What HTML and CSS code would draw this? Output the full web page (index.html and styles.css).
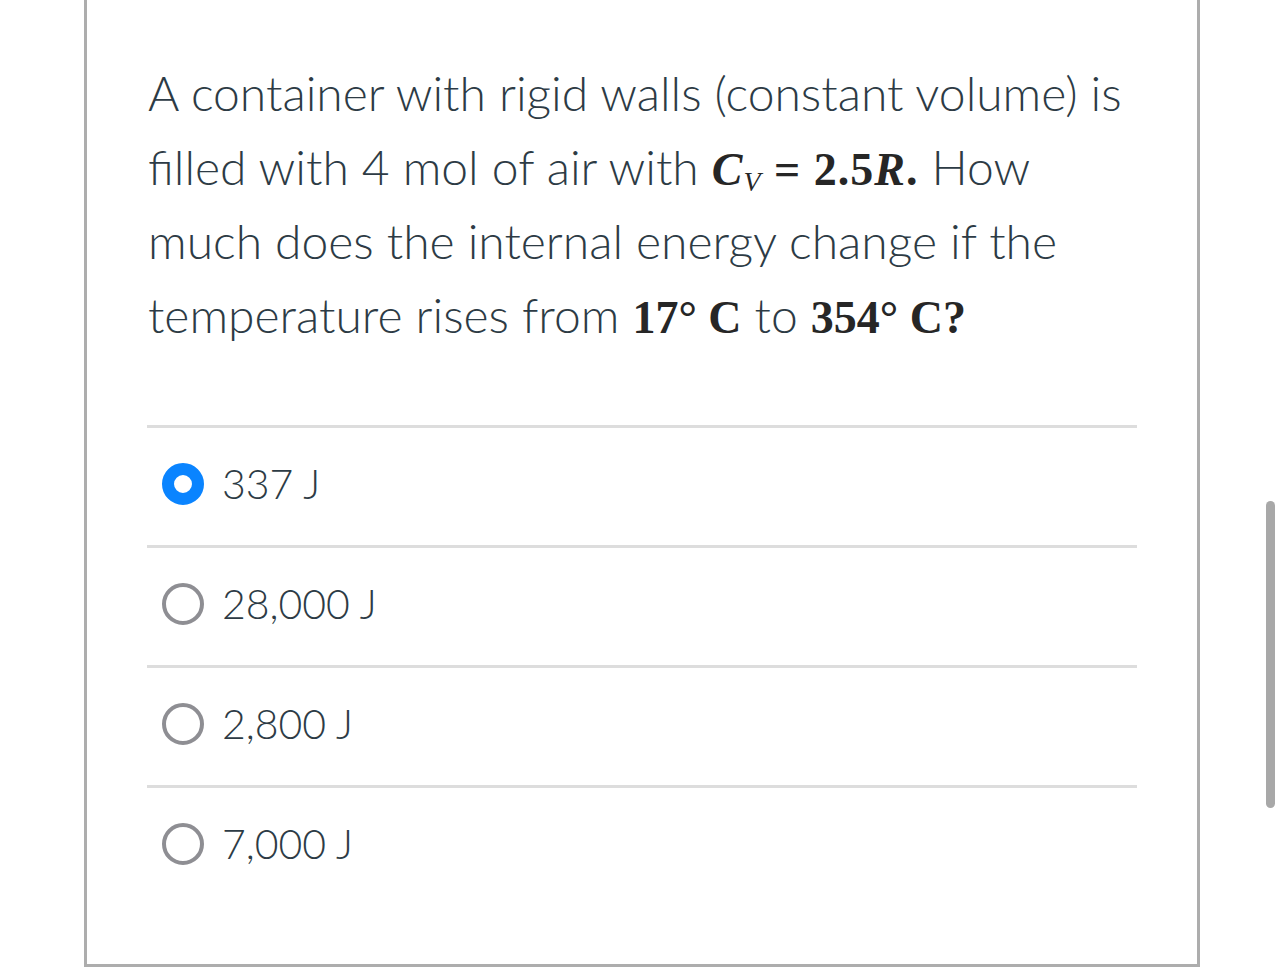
FILE: index.html
```html
<!DOCTYPE html>
<html lang="en">
<head>
<meta charset="utf-8">
<title>Question</title>
<link rel="stylesheet" href="styles.css">
</head>
<body>
<div class="page">
  <div class="card">
    <p class="question">A container with rigid walls (constant volume) is filled with 4 mol of air with <span class="math eq"><b class="it">C</b><sub class="sub">V</sub> = 2.5<b class="it">R</b>.</span> How much does the internal energy change if the temperature rises from <span class="math">17° C</span> to <span class="math">354° C?</span></p>
    <ul class="options">
      <li class="option"><span class="radio selected"></span><span class="label">337 J</span></li>
      <li class="option"><span class="radio"></span><span class="label">28,000 J</span></li>
      <li class="option"><span class="radio"></span><span class="label">2,800 J</span></li>
      <li class="option"><span class="radio"></span><span class="label">7,000 J</span></li>
    </ul>
  </div>
</div>
<div class="scrollbar"></div>
</body>
</html>
```
FILE: styles.css
```css
html, body {
  margin: 0;
  padding: 0;
  background: #ffffff;
}
.page {
  width: 1284px;
  height: 978px;
  overflow: hidden;
}
.card {
  box-sizing: border-box;
  margin-left: 84px;
  width: 1116px;
  height: 967px;
  border: 3px solid #adadad;
  border-top: none;
  padding: 0 60px 0 60px;
  font-family: "Lato", "Helvetica Neue", Arial, sans-serif;
  color: #2d3b45;
}
.question {
  margin: 0;
  padding-top: 56px;
  padding-left: 1px;
  font-size: 48px;
  font-weight: 300;
  line-height: 74px;
  height: 369px;
}
.math {
  font-family: "Liberation Serif", "Times New Roman", serif;
  font-weight: bold;
  font-size: 46px;
  color: #262626;
  line-height: 52px;
}
.eq {
  letter-spacing: 1px;
}
.it {
  font-style: italic;
  font-weight: bold;
}
.sub {
  font-style: italic;
  font-weight: normal;
  font-size: 28px;
  vertical-align: -6px;
  line-height: 30px;
}
.options {
  list-style: none;
  margin: 0;
  padding: 0;
}
.option {
  display: flex;
  align-items: center;
  gap: 20px;
  border-top: 3px solid #dddddd;
  padding-left: 15px;
  padding-bottom: 6px;
  height: 111px;
}
.radio {
  box-sizing: border-box;
  width: 42px;
  height: 42px;
  border-radius: 50%;
  border: 4px solid #8e8e93;
  flex: none;
}
.radio.selected {
  border: 12px solid #0a84ff;
}
.label {
  font-size: 41px;
  font-weight: 300;
  color: #2d3b45;
  margin-left: -2px;
}
.scrollbar {
  position: fixed;
  left: 1266px;
  top: 501px;
  width: 9px;
  height: 307px;
  border-radius: 5px;
  background: #a8a8a8;
}
```
